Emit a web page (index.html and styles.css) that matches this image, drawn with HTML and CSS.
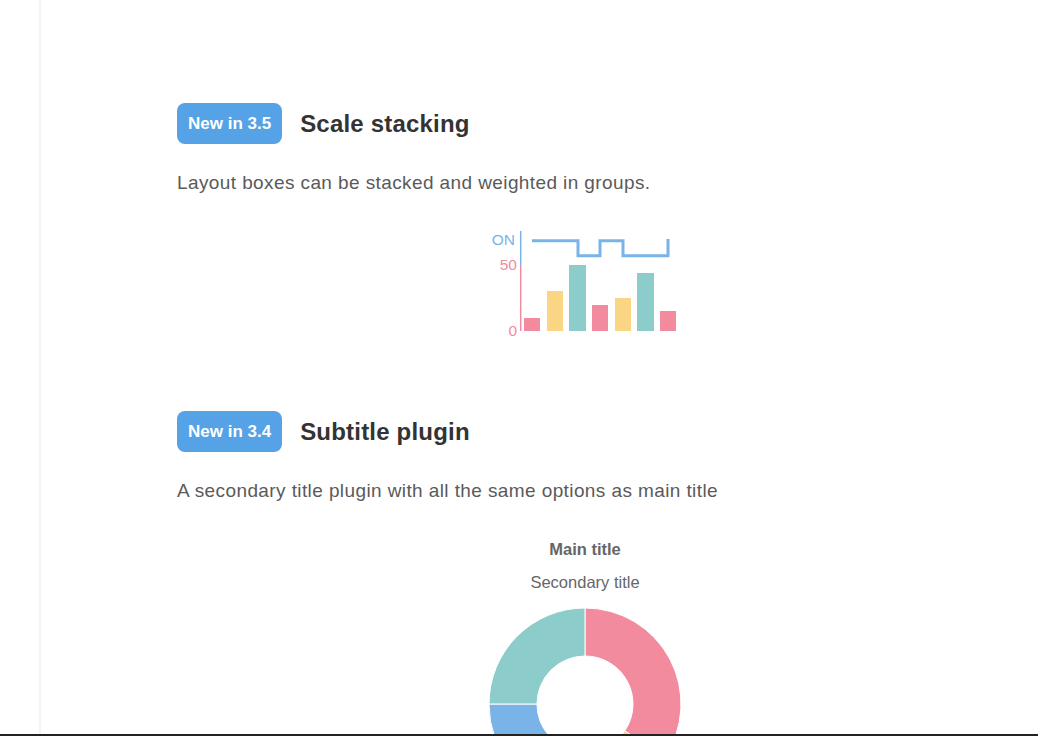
FILE: index.html
```html
<!DOCTYPE html>
<html>
    <head>
        <title>What's new</title>
        <meta charset="utf-8">
        <meta name="viewport" content="width=device-width, initial-scale=1">
        <link rel="stylesheet" href="styles.css">
    </head>
    <body>
        <div class="wn-page">
            <aside class="wn-sidebar"></aside>
            <main class="wn-main">
                <section class="wn-feature">
                    <div class="wn-feature__header">
                        <span class="wn-badge">New in 3.5</span>
                        <h2 class="wn-feature__title">Scale stacking</h2>
                    </div>
                    <p class="wn-feature__text">Layout boxes can be stacked and weighted in groups.</p>
                    <div class="wn-chart">
                        <svg class="wn-chart__stacked" width="210" height="120" viewBox="0 0 210 120">
                            <text x="35" y="20" text-anchor="end" class="wn-chart__tick wn-chart__tick--blue">ON</text>
                            <text x="37" y="45" text-anchor="end" class="wn-chart__tick wn-chart__tick--red">50</text>
                            <text x="37" y="111" text-anchor="end" class="wn-chart__tick wn-chart__tick--red">0</text>
                            <line x1="40.7" y1="6" x2="40.7" y2="41" stroke="#7ab3e8" stroke-width="1.5"/>
                            <line x1="40.7" y1="41" x2="40.7" y2="106" stroke="#f28b9e" stroke-width="1.5"/>
                            <polyline points="52,15.7 98,15.7 98,30.7 120,30.7 120,15.7 143,15.7 143,30.7 188,30.7 188,14" fill="none" stroke="#7ab3e8" stroke-width="3"/>
                            <rect x="44" y="93" width="16" height="13" fill="#f28b9e"/>
                            <rect x="67" y="66" width="16" height="40" fill="#fad583"/>
                            <rect x="89" y="40" width="17" height="66" fill="#8ccdcb"/>
                            <rect x="112" y="80" width="16" height="26" fill="#f28b9e"/>
                            <rect x="135" y="73" width="16" height="33" fill="#fad583"/>
                            <rect x="157" y="48" width="17" height="58" fill="#8ccdcb"/>
                            <rect x="180" y="86" width="16" height="20" fill="#f28b9e"/>
                        </svg>
                    </div>
                </section>

                <section class="wn-feature">
                    <div class="wn-feature__header">
                        <span class="wn-badge">New in 3.4</span>
                        <h2 class="wn-feature__title">Subtitle plugin</h2>
                    </div>
                    <p class="wn-feature__text">A secondary title plugin with all the same options as main title</p>
                    <div class="wn-chart">
                        <div class="wn-chart__title">Main title</div>
                        <div class="wn-chart__subtitle">Secondary title</div>
                        <svg class="wn-chart__donut" width="200" height="200" viewBox="-100 -100 200 200">
                            <!-- red 0-124deg, yellow 124-229, blue 229-270, teal 270-360 -->
                            <path d="M0,-96 A96,96 0 0 1 79.59,53.68 L39.79,26.84 A48,48 0 0 0 0,-48 Z" fill="#f28b9e" stroke="#fff" stroke-width="1"/>
                            <path d="M79.59,53.68 A96,96 0 0 1 -72.45,62.98 L-36.23,31.49 A48,48 0 0 0 39.79,26.84 Z" fill="#fad583" stroke="#fff" stroke-width="1"/>
                            <path d="M-72.45,62.98 A96,96 0 0 1 -96,0 L-48,0 A48,48 0 0 0 -36.23,31.49 Z" fill="#7ab3e8" stroke="#fff" stroke-width="1"/>
                            <path d="M-96,0 A96,96 0 0 1 0,-96 L0,-48 A48,48 0 0 0 -48,0 Z" fill="#8ccdcb" stroke="#fff" stroke-width="1"/>
                        </svg>
                    </div>
                </section>
            </main>
        </div>
        <div class="wn-bottom-bar"></div>
    </body>
</html>
```

FILE: styles.css
```css
* {
    box-sizing: border-box;
}

html,
body {
    height: 100%;
}

body {
    margin: 0;
    display: flex;
    flex-direction: column;
    font-family: "Liberation Sans", Arial, sans-serif;
    background: #fff;
    color: #555;
}

.wn-page {
    flex: 1;
    display: flex;
    overflow: hidden;
}

.wn-sidebar {
    width: 41px;
    flex: none;
    border-right: 2px solid #f4f4f4;
}

.wn-main {
    width: 816px;
    margin-left: 136px;
    padding-top: 103px;
}

.wn-feature {
    margin-bottom: 66px;
}

.wn-feature__header {
    display: flex;
    align-items: center;
    gap: 18px;
    margin-bottom: 27px;
}

.wn-badge {
    display: inline-block;
    height: 41px;
    line-height: 41px;
    padding: 0 11px;
    border-radius: 8px;
    background: #55a2e6;
    color: #fff;
    font-size: 17px;
    font-weight: bold;
}

.wn-feature__title {
    margin: 0;
    font-size: 24px;
    font-weight: bold;
    letter-spacing: 0.2px;
    color: #333;
}

.wn-feature__text {
    margin: 0 0 30px 0;
    font-size: 19px;
    line-height: 24px;
    letter-spacing: 0.4px;
    color: #5a5a5a;
}

.wn-chart {
    display: flex;
    flex-direction: column;
    align-items: center;
}

.wn-chart__stacked {
    display: block;
}

.wn-chart__tick {
    font-family: "Liberation Sans", Arial, sans-serif;
    font-size: 15.5px;
}

.wn-chart__tick--blue {
    fill: #7ab3e8;
}

.wn-chart__tick--red {
    fill: #f28b9e;
}

.wn-chart__title {
    margin-top: 6px;
    font-size: 16.5px;
    line-height: 20px;
    font-weight: bold;
    color: #666;
}

.wn-chart__subtitle {
    margin-top: 13px;
    font-size: 16.5px;
    line-height: 20px;
    color: #666;
}

.wn-chart__donut {
    display: block;
    margin-top: 12px;
}

.wn-bottom-bar {
    height: 2px;
    flex: none;
    background: #222;
}
```
